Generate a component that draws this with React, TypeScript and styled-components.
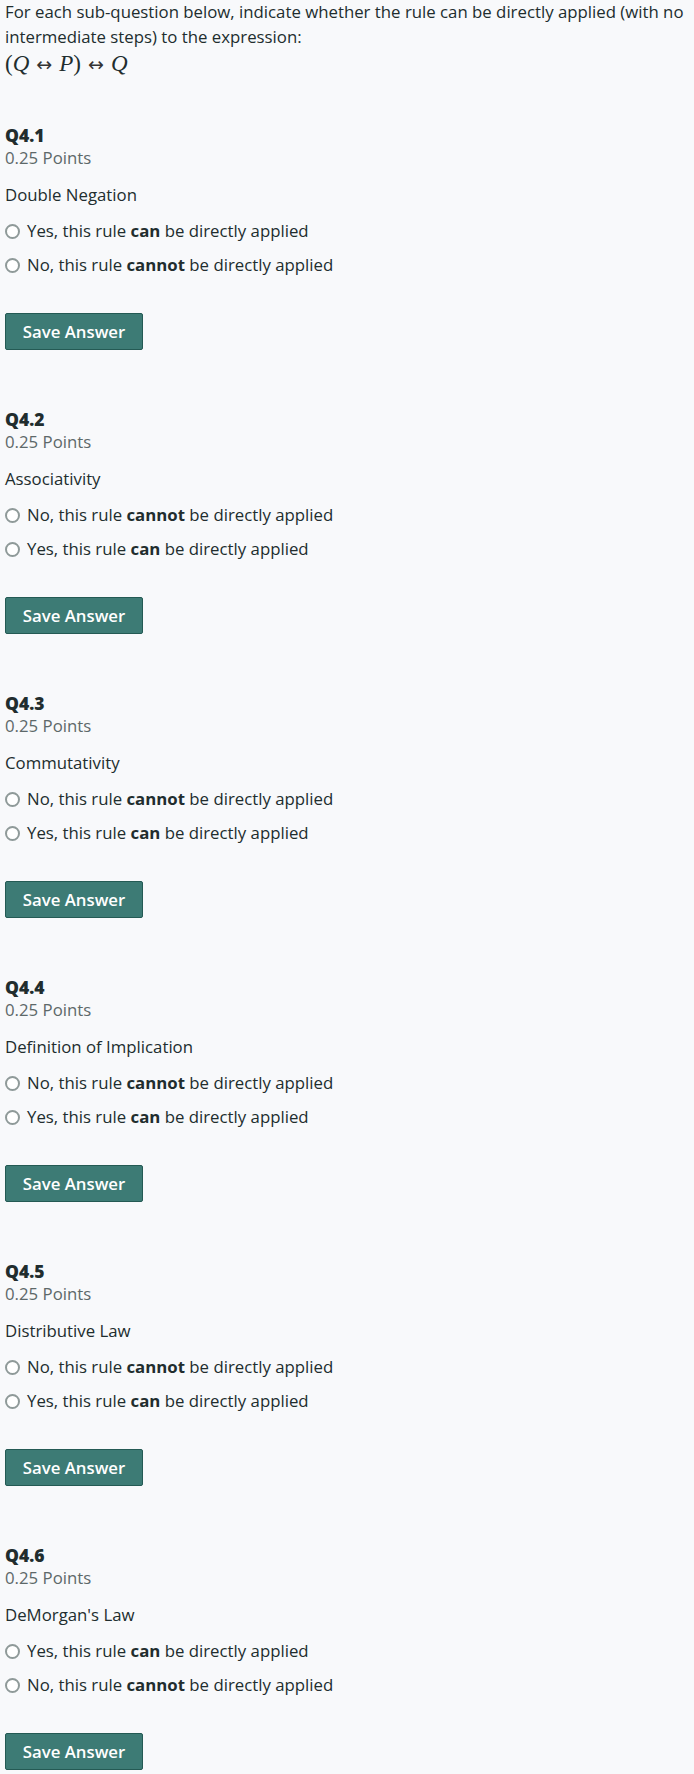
import { createGlobalStyle } from "styled-components";
import styled from "styled-components";

const GlobalStyle = createGlobalStyle`
	body {
		margin: 0;
		background: #f8f9fb;
		font-family: "Open Sans", Lato, sans-serif;
		color: #212d2e;
	}
`;

const Page = styled.div`
	padding: 0 5px 20px;
`;

const Intro = styled.div`
	font-size: 16.8px;
	line-height: 25px;
	margin-top: -1px;
`;

const MathLine = styled.div`
	font-family: "Liberation Serif", "DejaVu Serif", serif;
	font-size: 23px;
	line-height: 30px;
`;

const Var = styled.i`
	font-style: italic;
`;

const Arrow = styled.span`
	font-family: "DejaVu Sans", sans-serif;
	font-size: 19px;
	margin: 0 7px;
	color: #333;
`;

const Question = styled.section`
	margin-top: 58px;
	&:first-of-type {
		margin-top: 45px;
	}
`;

const Title = styled.h3`
	margin: 0;
	font-size: 17.5px;
	font-weight: 800;
	line-height: 22px;
`;

const Points = styled.div`
	font-size: 16.8px;
	line-height: 22px;
	margin-top: 1px;
	color: #5d6869;
`;

const RuleName = styled.div`
	font-size: 16.8px;
	line-height: 22px;
	margin-top: 15px;
`;

const Options = styled.div`
	display: flex;
	flex-direction: column;
	gap: 12px;
	margin-top: 14px;
`;

const Option = styled.label`
	display: flex;
	align-items: center;
	gap: 7px;
	font-size: 16.8px;
	line-height: 22px;
`;

const Radio = styled.span`
	width: 11px;
	height: 11px;
	border: 2px solid #8f9a99;
	border-radius: 50%;
	background: #fff;
	flex-shrink: 0;
`;

const SaveButton = styled.button`
	display: block;
	margin-top: 37px;
	width: 138px;
	height: 37px;
	background: #3d7b75;
	border: 1px solid #245a54;
	border-radius: 2px;
	color: #fff;
	font-family: "Open Sans", Lato, sans-serif;
	font-size: 16.8px;
	font-weight: 600;
`;

type Opt = { yes: boolean };

const questions: { id: string; name: string; options: Opt[] }[] = [
	{ id: "Q4.1", name: "Double Negation", options: [{ yes: true }, { yes: false }] },
	{ id: "Q4.2", name: "Associativity", options: [{ yes: false }, { yes: true }] },
	{ id: "Q4.3", name: "Commutativity", options: [{ yes: false }, { yes: true }] },
	{ id: "Q4.4", name: "Definition of Implication", options: [{ yes: false }, { yes: true }] },
	{ id: "Q4.5", name: "Distributive Law", options: [{ yes: false }, { yes: true }] },
	{ id: "Q4.6", name: "DeMorgan's Law", options: [{ yes: true }, { yes: false }] },
];

const OptionText = ({ yes }: Opt) =>
	yes ? (
		<span>
			Yes, this rule <b>can</b> be directly applied
		</span>
	) : (
		<span>
			No, this rule <b>cannot</b> be directly applied
		</span>
	);

export default function App() {
	return (
		<>
			<GlobalStyle />
			<Page>
				<Intro>
					For each sub-question below, indicate whether the rule can be directly applied (with no
					intermediate steps) to the expression:
				</Intro>
				<MathLine>
					(<Var>Q</Var>
					<Arrow>↔</Arrow>
					<Var>P</Var>)<Arrow>↔</Arrow>
					<Var>Q</Var>
				</MathLine>
				{questions.map((q) => (
					<Question key={q.id}>
						<Title>{q.id}</Title>
						<Points>0.25 Points</Points>
						<RuleName>{q.name}</RuleName>
						<Options>
							{q.options.map((o, i) => (
								<Option key={i}>
									<Radio />
									<OptionText yes={o.yes} />
								</Option>
							))}
						</Options>
						<SaveButton>Save Answer</SaveButton>
					</Question>
				))}
			</Page>
		</>
	);
}
